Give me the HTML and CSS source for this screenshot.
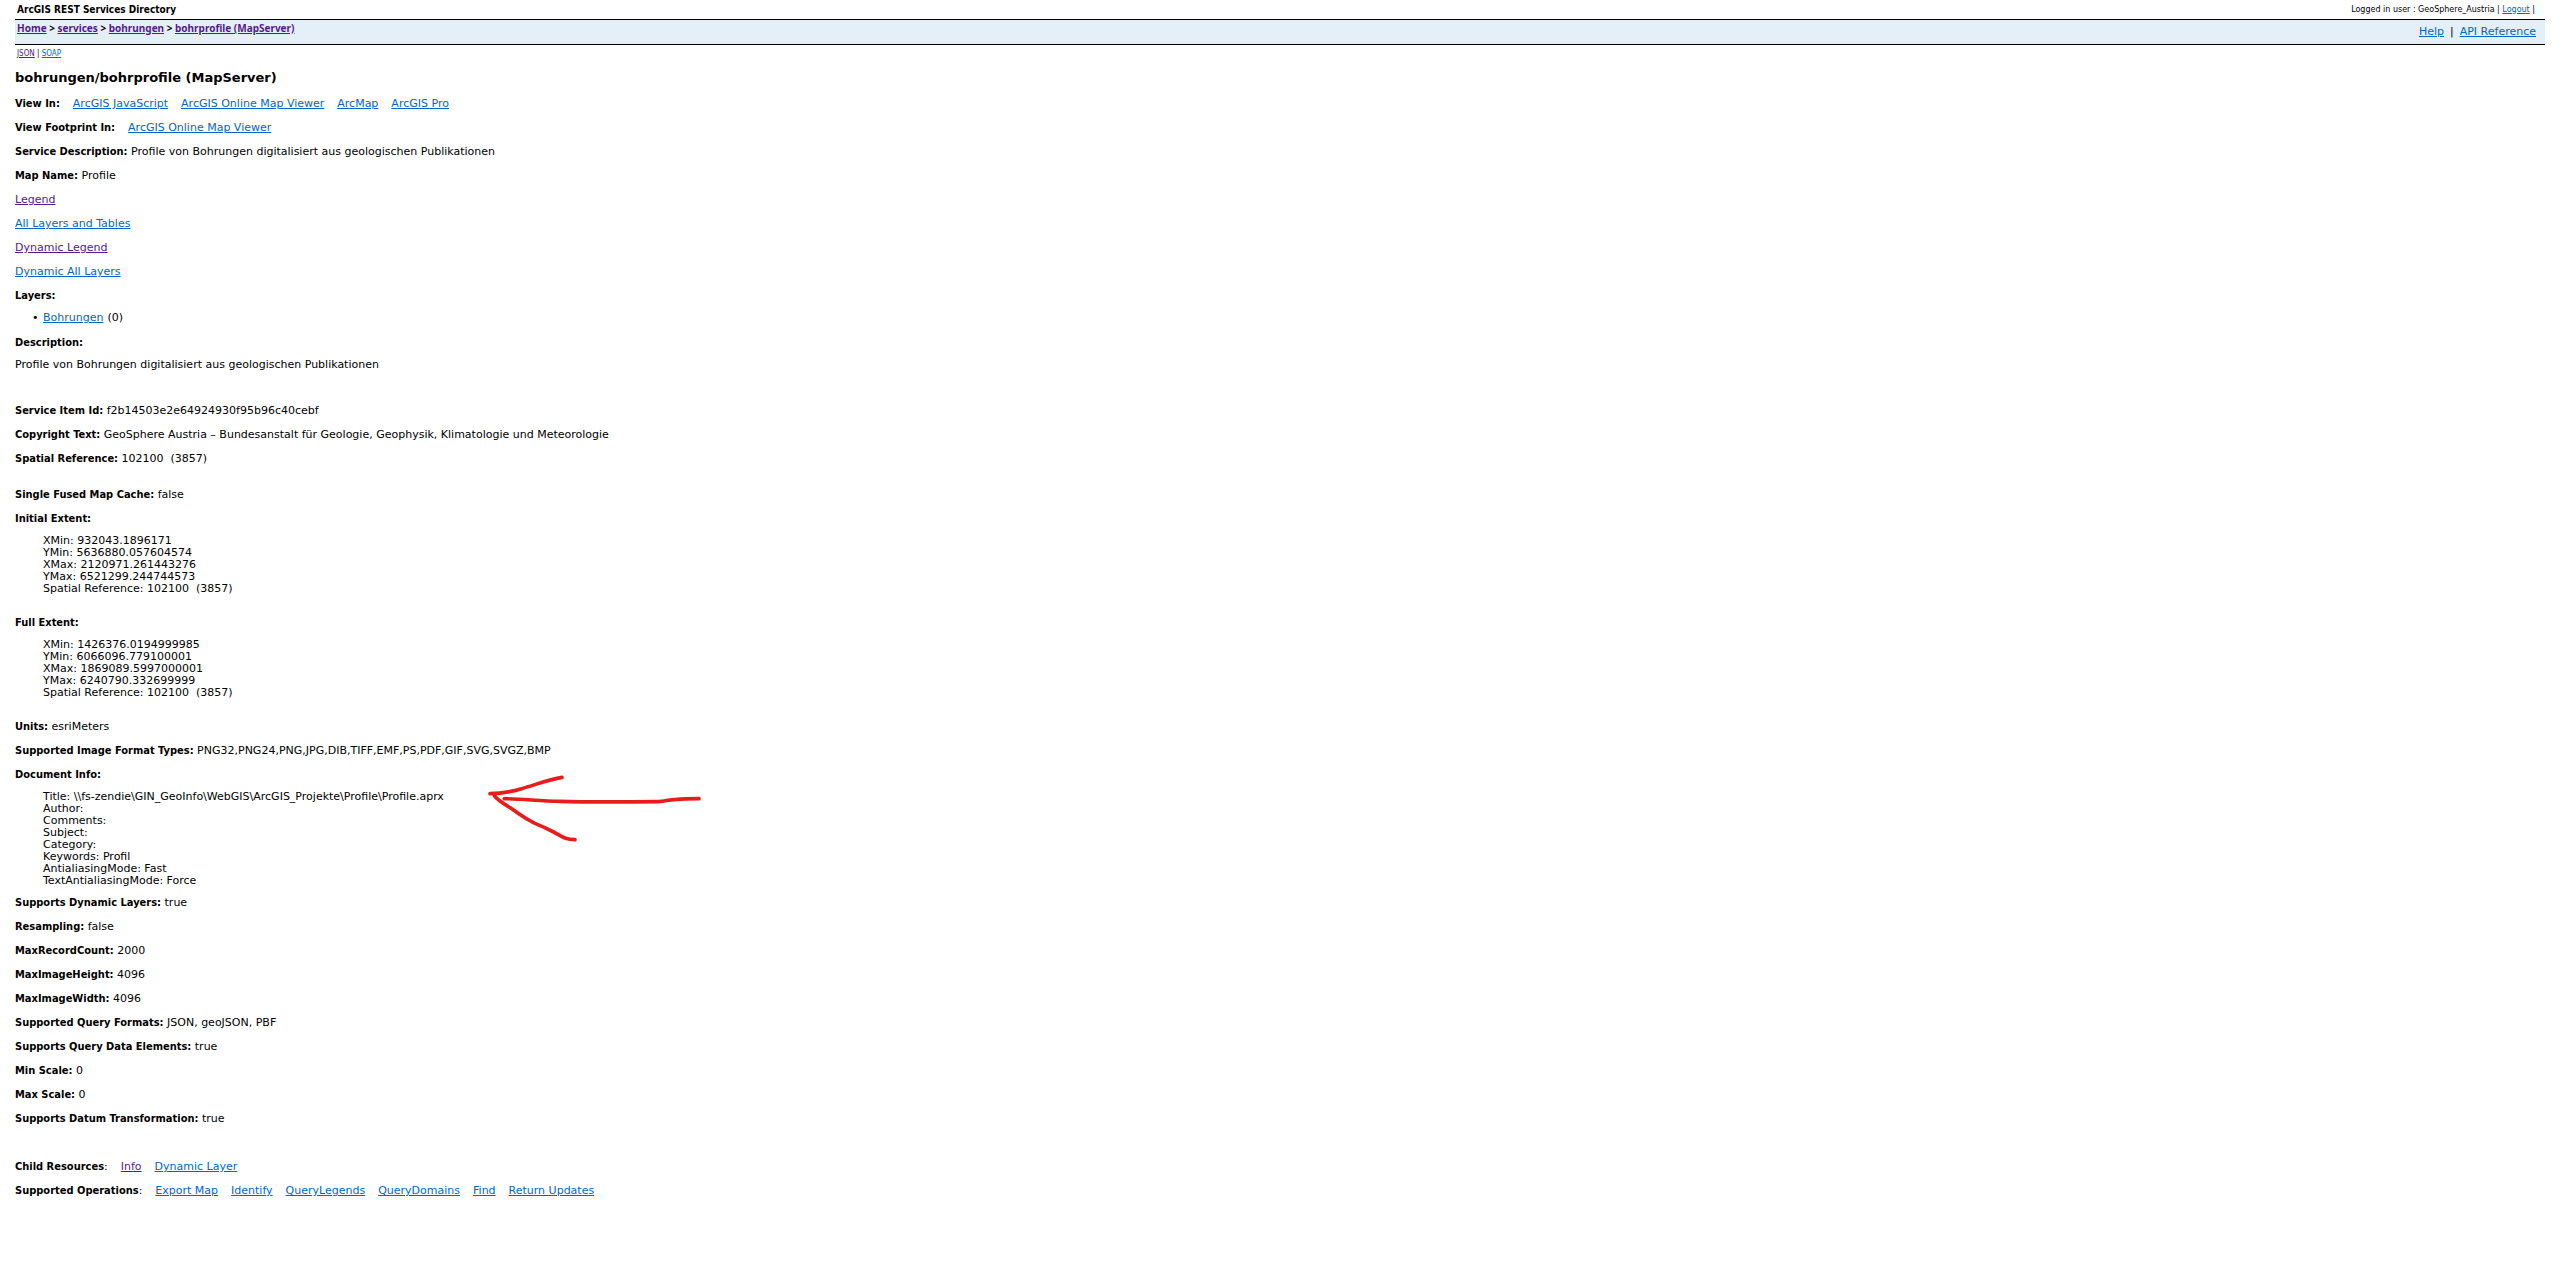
FILE: index.html
```html
<!DOCTYPE html>
<html lang="en">
<head>
<meta charset="utf-8">
<title>bohrungen/bohrprofile (MapServer)</title>
<link rel="stylesheet" href="styles.css">
</head>
<body>
<header>
  <div class="topbar">
    <strong class="brand">ArcGIS REST Services Directory</strong>
    <span class="user">Logged in user : GeoSphere_Austria | <a href="#logout">Logout</a> |</span>
  </div>
  <nav class="navbar">
    <div class="breadcrumb"><a class="visited" href="#home">Home</a> &gt; <a class="visited" href="#services">services</a> &gt; <a class="visited" href="#bohrungen">bohrungen</a> &gt; <a class="visited" href="#bohrprofile">bohrprofile (MapServer)</a></div>
    <div class="help"><a href="#help">Help</a><span>|</span><a href="#api">API Reference</a></div>
  </nav>
  <div class="formats"><a class="visited" href="#json">JSON</a> | <a href="#soap">SOAP</a></div>
</header>
<main>
  <h1>bohrungen/bohrprofile (MapServer)</h1>
  <div class="row links"><b>View In:</b><a href="#js">ArcGIS JavaScript</a><a href="#online">ArcGIS Online Map Viewer</a><a href="#arcmap">ArcMap</a><a href="#pro">ArcGIS Pro</a></div>
  <div class="row links"><b>View Footprint In:</b><a href="#footprint">ArcGIS Online Map Viewer</a></div>
  <p class="row"><b>Service Description:</b> Profile von Bohrungen digitalisiert aus geologischen Publikationen</p>
  <p class="row"><b>Map Name:</b> Profile</p>
  <p class="row"><a class="visited" href="#legend">Legend</a></p>
  <p class="row"><a href="#layers">All Layers and Tables</a></p>
  <p class="row"><a class="visited" href="#dynlegend">Dynamic Legend</a></p>
  <p class="row"><a href="#dynlayers">Dynamic All Layers</a></p>
  <h2 class="row">Layers:</h2>
  <ul class="list bullets"><li><a href="#layer0">Bohrungen</a> (0)</li></ul>
  <h2 class="row">Description:</h2>
  <p class="row description">Profile von Bohrungen digitalisiert aus geologischen Publikationen</p>
  <p class="row"><b>Service Item Id:</b> f2b14503e2e64924930f95b96c40cebf</p>
  <p class="row"><b>Copyright Text:</b> GeoSphere Austria – Bundesanstalt für Geologie, Geophysik, Klimatologie und Meteorologie</p>
  <p class="row spaced"><b>Spatial Reference:</b> 102100 &nbsp;(3857)</p>
  <p class="row"><b>Single Fused Map Cache:</b> false</p>
  <h2 class="row">Initial Extent:</h2>
  <ul class="list extent">
    <li>XMin: 932043.1896171</li>
    <li>YMin: 5636880.057604574</li>
    <li>XMax: 2120971.261443276</li>
    <li>YMax: 6521299.244744573</li>
    <li>Spatial Reference: 102100 &nbsp;(3857)</li>
  </ul>
  <h2 class="row">Full Extent:</h2>
  <ul class="list extent">
    <li>XMin: 1426376.0194999985</li>
    <li>YMin: 6066096.779100001</li>
    <li>XMax: 1869089.5997000001</li>
    <li>YMax: 6240790.332699999</li>
    <li>Spatial Reference: 102100 &nbsp;(3857)</li>
  </ul>
  <p class="row"><b>Units:</b> esriMeters</p>
  <p class="row"><b>Supported Image Format Types:</b> PNG32,PNG24,PNG,JPG,DIB,TIFF,EMF,PS,PDF,GIF,SVG,SVGZ,BMP</p>
  <h2 class="row">Document Info:</h2>
  <ul class="list document">
    <li>Title: \\fs-zendie\GIN_GeoInfo\WebGIS\ArcGIS_Projekte\Profile\Profile.aprx
      <svg class="arrow" width="230" height="90" viewBox="0 0 690 270" aria-hidden="true">
        <path d="M30 101Q75 101 125 86C165 75 205 58 246 52"/>
        <path d="M43 107C55 123 75 133 93 145C120 163 130 174 165 190Q192 201 221 216C247 230 255 239 285 239"/>
        <path d="M73 116C130 116 180 124 240 124C330 127 430 126 535 125C562 124 558 119 590 118Q610 116 657 116"/>
      </svg>
    </li>
    <li>Author:</li>
    <li>Comments:</li>
    <li>Subject:</li>
    <li>Category:</li>
    <li>Keywords: Profil</li>
    <li>AntialiasingMode: Fast</li>
    <li>TextAntialiasingMode: Force</li>
  </ul>
  <p class="row"><b>Supports Dynamic Layers:</b> true</p>
  <p class="row"><b>Resampling:</b> false</p>
  <p class="row"><b>MaxRecordCount:</b> 2000</p>
  <p class="row"><b>MaxImageHeight:</b> 4096</p>
  <p class="row"><b>MaxImageWidth:</b> 4096</p>
  <p class="row"><b>Supported Query Formats:</b> JSON, geoJSON, PBF</p>
  <p class="row"><b>Supports Query Data Elements:</b> true</p>
  <p class="row"><b>Min Scale:</b> 0</p>
  <p class="row"><b>Max Scale:</b> 0</p>
  <p class="row last"><b>Supports Datum Transformation:</b> true</p>
  <div class="row links"><span><b>Child Resources</b>:</span><a class="visited" href="#info">Info</a><a href="#dynlayer">Dynamic Layer</a></div>
  <div class="row links"><span><b>Supported Operations</b>:</span><a href="#export">Export Map</a><a href="#identify">Identify</a><a href="#querylegends">QueryLegends</a><a href="#querydomains">QueryDomains</a><a href="#find">Find</a><a href="#updates">Return Updates</a></div>
</main>
</body>
</html>
```
FILE: styles.css
```css
body {
  margin: 0;
  padding: 0 15px;
  background: #fff;
  color: #000;
  font: 11px/12px "DejaVu Sans", Verdana, sans-serif;
}

a { color: #0066cc; }
a.visited { color: #551a8b; }

b, h2, .brand {
  font-family: "DejaVu Sans Condensed", Tahoma, sans-serif;
  font-weight: 700;
}

.topbar {
  display: flex;
  justify-content: space-between;
  align-items: center;
  height: 19px;
  padding: 0 10px 0 2px;
}
.brand { font-size: 10px; }
.user { font-size: 8px; }

.navbar {
  display: flex;
  justify-content: space-between;
  padding: 2px 9px 4px 2px;
  border: solid #000;
  border-width: 1px 0;
  background: #e5eff7;
}
.breadcrumb { font: 700 10px/12px "Noto Sans", sans-serif; }
.help { display: flex; gap: 6px; padding: 4px 0 2px; }

.formats {
  padding: 4px 2px 0;
  font: 8px/10px "DejaVu Sans Condensed", sans-serif;
}

h1 { margin: 11px 0 12px; font-size: 13px; line-height: 16px; }

.row { margin: 0 0 12px; font-size: 11px; }
.links { display: flex; flex-wrap: wrap; gap: 13px; }
h2.row { margin-bottom: 10px; }
.row.spaced { margin-bottom: 24px; }
.row.description { margin-bottom: 34px; }
.row.last { margin-bottom: 36px; }

.list { margin: 0 0 13px; padding: 0 0 0 28px; list-style: none; }
.extent { margin-bottom: 22px; }
.document { margin-bottom: 10px; }
.document li { position: relative; }
.bullets li { display: flex; gap: 4px; }
.bullets li::before { content: "•"; width: 7px; margin-left: -11px; }

.arrow {
  position: absolute;
  top: -31px;
  left: 437px;
  fill: none;
  stroke: #e81c1c;
  stroke-width: 11;
  stroke-linecap: round;
  stroke-linejoin: round;
}
```
